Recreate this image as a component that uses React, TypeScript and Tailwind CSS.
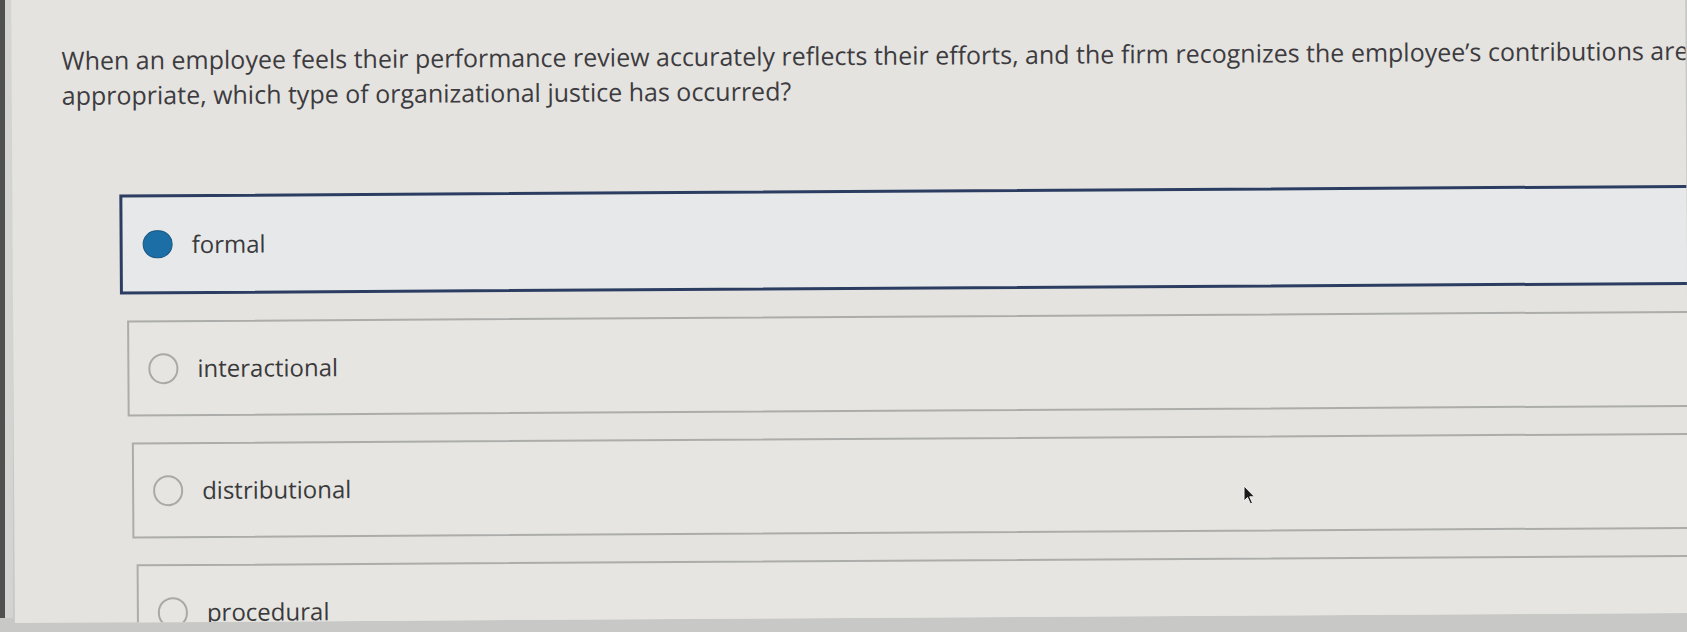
import React from "react";

const options = [
  { id: 1, label: "formal", selected: true, offset: "ml-[107px]", gap: "mt-[82px]" },
  { id: 2, label: "interactional", selected: false, offset: "ml-[114px]", gap: "mt-[26px]" },
  { id: 3, label: "distributional", selected: false, offset: "ml-[118px]", gap: "mt-[26px]" },
  { id: 4, label: "procedural", selected: false, offset: "ml-[122px]", gap: "mt-[26px]" },
];

const App = () => {
  return (
    <div className="relative w-[1687px] h-[632px] overflow-hidden bg-[#c8c8c6] font-['Open_Sans','Noto_Sans',sans-serif]">
      <div className="flex h-[618px]">
        {/* monitor edge */}
        <div className="w-[5px] h-full bg-[#4f4f4f]" />
        <div className="w-[8px] h-full bg-[#d3d3d1]" />

        {/* quiz page */}
        <div className="flex-1 h-[630px] -mt-[12px] overflow-hidden bg-[#e4e3df] rotate-[-0.35deg]">
          <div className="flex flex-col pt-[50px]">
            <p className="ml-[50px] whitespace-nowrap text-[25px] leading-[35px] text-[#3d3b40]">
              When an employee feels their performance review accurately reflects their efforts, and the firm recognizes the employee’s contributions are
              <br />
              appropriate, which type of organizational justice has occurred?
            </p>

            {options.map((option) => (
              <div
                key={option.id}
                className={`${option.offset} ${option.gap} w-[1700px] shrink-0 flex items-center ${
                  option.selected
                    ? "h-[100px] border-[3px] border-[#2c3d62] bg-[#e7e8e9] pl-[20px]"
                    : "h-[96px] border-2 border-[#acacaa] bg-[#e6e5e1] pl-[19px]"
                }`}
              >
                {option.selected ? (
                  <span className="w-[30px] h-[28px] rounded-full bg-[#1c6ea6] border border-[#17557f]" />
                ) : (
                  <span className="w-[30px] h-[31px] rounded-full border-2 border-[#a9a9a7]" />
                )}
                <span className="ml-[19px] text-[24px] leading-none text-[#3a3a3c]">
                  {option.label}
                </span>
              </div>
            ))}
          </div>
        </div>
      </div>

      {/* mouse pointer */}
      <svg
        className="absolute left-[1243px] top-[485px]"
        width="14"
        height="20"
        viewBox="0 0 14 20"
      >
        <path
          d="M1 1 L1 16 L4.5 12.5 L7.5 19 L9.5 18 L6.7 11.8 L11.5 11.8 Z"
          fill="#1a1a1a"
          stroke="#f2f2f2"
          strokeWidth="1"
        />
      </svg>
    </div>
  );
};

export default App;
